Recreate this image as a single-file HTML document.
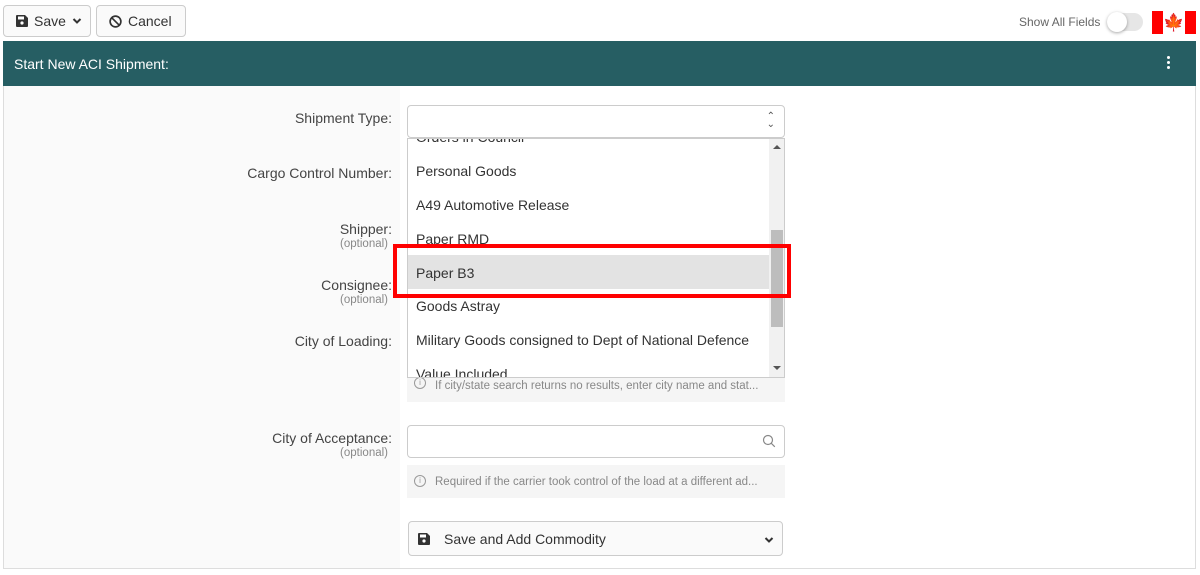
<!DOCTYPE html>
<html><head><style>
*{box-sizing:border-box;margin:0;padding:0}
body{width:1200px;height:575px;background:#fff;font-family:"Liberation Sans",sans-serif;position:relative;overflow:hidden;color:#333}
.a{position:absolute}
.btn{border:1px solid #ccc;border-radius:4px;background:#fafafa;font-size:14px;color:#333;display:flex;align-items:center;gap:6px;padding-left:12px}
.lbl{position:absolute;right:808px;font-size:14px;color:#444;text-align:right}
.opt{position:absolute;right:0;font-size:11.5px;color:#888}
.inp{position:absolute;left:407px;width:378px;height:33px;border:1px solid #ccc;border-radius:4px;background:#fff}
.info{position:absolute;left:407px;width:378px;background:#f5f5f5;font-size:11.5px;color:#888;padding-left:28px;display:flex;align-items:center}
.item{position:absolute;left:8px;font-size:14px;color:#333}
</style></head><body>
<div class="a btn" style="left:3px;top:5px;width:88px;height:32px"><svg width="12" height="12" viewBox="0 0 12 12"><path d="M0 1a1 1 0 0 1 1-1h8l3 3v8a1 1 0 0 1-1 1H1a1 1 0 0 1-1-1z" fill="#333"/><rect x="2" y="1.5" width="6" height="3" fill="#fff"/><circle cx="6" cy="8" r="1.6" fill="#fff"/></svg>Save<svg width="10" height="8" viewBox="0 0 10 8"><path d="M1.5 2l3.5 3.5L8.5 2" stroke="#333" stroke-width="2" fill="none"/></svg></div>
<div class="a btn" style="left:96px;top:5px;width:90px;height:32px"><svg width="13" height="13" viewBox="0 0 14 14"><circle cx="7" cy="7" r="5.8" stroke="#333" stroke-width="1.8" fill="none"/><path d="M3 3l8 8" stroke="#333" stroke-width="1.8"/></svg>Cancel</div>
<div class="a" style="left:1019px;top:15px;font-size:12px;color:#666">Show All Fields</div>
<div class="a" style="left:1107px;top:13px;width:36px;height:18px;border-radius:9px;background:#e6e6e6"></div>
<div class="a" style="left:1107px;top:12px;width:20px;height:20px;border-radius:50%;background:#fff;box-shadow:0 1px 3px rgba(0,0,0,.35)"></div>
<div class="a" style="left:1152px;top:11px;width:44px;height:23px;background:#fff;display:flex"><div style="width:11px;background:#f00"></div><div style="flex:1;text-align:center;color:#f00;font-size:17px;line-height:23px">🍁</div><div style="width:11px;background:#f00"></div></div>
<div class="a" style="left:3px;top:41px;width:1193px;height:528px;border:1px solid #ddd;border-top:none"></div>
<div class="a" style="left:3px;top:41px;width:1193px;height:45px;background:#265e63;color:#fff;font-size:14px;padding:15px 0 0 11px">Start New ACI Shipment:<div class="a" style="right:26px;top:15px;width:3px">
<div style="width:3px;height:3px;background:#fff;border-radius:50%;margin-bottom:2px"></div><div style="width:3px;height:3px;background:#fff;border-radius:50%;margin-bottom:2px"></div><div style="width:3px;height:3px;background:#fff;border-radius:50%"></div></div></div>
<div class="a" style="left:4px;top:86px;width:396px;height:482px;background:#fafafa"></div>
<div class="lbl" style="top:110px">Shipment Type:</div>
<div class="lbl" style="top:165px">Cargo Control Number:</div>
<div class="lbl" style="top:221px;height:30px">Shipper:<div class="opt" style="top:17px;right:4px">(optional)</div></div>
<div class="lbl" style="top:277px;height:30px">Consignee:<div class="opt" style="top:17px;right:4px">(optional)</div></div>
<div class="lbl" style="top:333px">City of Loading:</div>
<div class="lbl" style="top:430px;height:30px">City of Acceptance:<div class="opt" style="top:17px;right:4px">(optional)</div></div>
<div class="inp" style="top:105px"><div class="a" style="right:9px;top:7px;font-size:10px;color:#555;line-height:8px">&#8963;<br>&#8964;</div></div>
<div class="info" style="top:365px;height:37px;padding-top:4px">If city/state search returns no results, enter city name and stat...</div>
<div class="a" style="left:414px;top:377px;width:12px;height:12px;border:1px solid #999;border-radius:50%;font-size:8px;color:#999;text-align:center;line-height:10px">i</div>
<div class="a" style="left:407px;top:138px;width:378px;height:240px;border:1px solid #ccc;background:#fff;overflow:hidden">
<div class="item" style="top:-10px">Orders in Council</div>
<div class="item" style="top:24px">Personal Goods</div>
<div class="item" style="top:58px">A49 Automotive Release</div>
<div class="item" style="top:92px">Paper RMD</div>
<div class="a" style="left:0;top:116px;width:361px;height:34px;background:#e3e3e3"></div>
<div class="item" style="top:126px">Paper B3</div>
<div class="item" style="top:159px">Goods Astray</div>
<div class="item" style="top:193px">Military Goods consigned to Dept of National Defence</div>
<div class="item" style="top:227px">Value Included</div>
<div class="a" style="left:361px;top:0;width:16px;height:240px;background:#f1f1f1"></div>
<div class="a" style="left:363px;top:91px;width:12px;height:97px;background:#bdbdbd"></div>
<div class="a" style="left:365px;top:6px;border:4px solid transparent;border-bottom:4px solid #555;border-top:none"></div>
<div class="a" style="left:365px;top:227px;border:4px solid transparent;border-top:4px solid #555;border-bottom:none"></div>
</div>
<div class="a" style="left:393px;top:244px;width:398px;height:54px;border:4px solid #f00"></div>
<div class="inp" style="top:425px"><svg class="a" style="right:8px;top:8px" width="14" height="14" viewBox="0 0 14 14"><circle cx="6" cy="6" r="4.5" stroke="#888" stroke-width="1.2" fill="none"/><path d="M9.3 9.3l3.5 3.5" stroke="#888" stroke-width="1.2"/></svg></div>
<div class="info" style="top:465px;height:33px">Required if the carrier took control of the load at a different ad...</div>
<div class="a" style="left:414px;top:475px;width:12px;height:12px;border:1px solid #999;border-radius:50%;font-size:8px;color:#999;text-align:center;line-height:10px">i</div>
<div class="a btn" style="left:408px;top:521px;width:375px;height:35px;padding-left:9px;gap:14px"><svg width="12" height="12" viewBox="0 0 12 12"><path d="M0 1a1 1 0 0 1 1-1h8l3 3v8a1 1 0 0 1-1 1H1a1 1 0 0 1-1-1z" fill="#333"/><rect x="2" y="1.5" width="6" height="3" fill="#fff"/><circle cx="6" cy="8" r="1.6" fill="#fff"/></svg>Save and Add Commodity<svg class="a" style="right:8px;top:14px" width="10" height="8" viewBox="0 0 10 8"><path d="M1.5 2l3.5 3.5L8.5 2" stroke="#333" stroke-width="2" fill="none"/></svg></div>
</body></html>
